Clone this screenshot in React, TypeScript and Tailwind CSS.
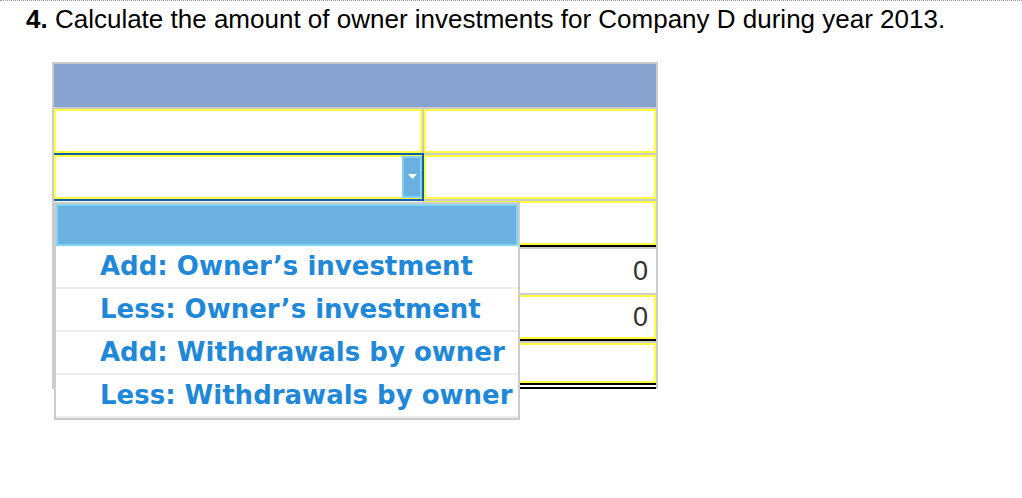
const options = [
  "Add: Owner’s investment",
  "Less: Owner’s investment",
  "Add: Withdrawals by owner",
  "Less: Withdrawals by owner",
];

function YellowCell({ children }: { children?: React.ReactNode }) {
  return (
    <div className="flex h-full items-center justify-end border-2 border-[#ffff40] bg-white pr-[6px]">
      {children}
    </div>
  );
}

function PlainCell({ children }: { children?: React.ReactNode }) {
  return <div className="flex h-full items-center justify-end bg-white pr-[8px]">{children}</div>;
}

export default function App() {
  return (
    <div className="relative h-[498px] w-[1022px] overflow-hidden border-t border-dotted border-[#9a9a9a] bg-white">
      <h1 className="pl-[26px] pt-[3px] font-['Liberation_Sans',Arial,sans-serif] text-[26px] leading-[30px] text-black">
        <span className="font-bold">4.</span> Calculate the amount of owner investments for Company D during year 2013.
      </h1>

      {/* worksheet table */}
      <div className="ml-[52px] mt-[28px] w-[606px] bg-[#cbcbcb] px-[2px] pt-[2px] font-['Liberation_Sans',Arial,sans-serif] text-[27px] text-[#333]">
        <div className="grid grid-cols-[368px_232px] gap-[2px]">
          <div className="col-span-2 h-[43px] bg-[#87a3d0]" />

          <div className="h-[44px]">
            <YellowCell />
          </div>
          <div className="h-[44px]">
            <YellowCell />
          </div>

          <div className="relative h-[44px] shadow-[0_-2px_0_#0d5fa8,2px_0_0_#0d5fa8,0_2px_0_#0d5fa8,2px_2px_0_#0d5fa8,2px_-2px_0_#0d5fa8]">
            <YellowCell />
            <div className="absolute bottom-[1px] right-0 top-[1px] flex w-[20px] items-center justify-center border-2 border-[#7fd2f2] bg-[#6ab0e0]">
              <svg width="9" height="6" viewBox="0 0 9 6">
                <path d="M0 0 H9 L4.5 5 Z" fill="#ffffff" />
              </svg>
            </div>
          </div>
          <div className="h-[44px]">
            <YellowCell />
          </div>

          {/* rows covered by the open list */}
          <div className="h-[46px] bg-white" />
          <div className="h-[46px] border-b-2 border-black">
            <YellowCell />
          </div>

          <div className="h-[44px] bg-white" />
          <div className="h-[44px]">
            <PlainCell>0</PlainCell>
          </div>

          <div className="h-[46px] bg-white" />
          <div className="h-[46px] border-b-2 border-black">
            <YellowCell>0</YellowCell>
          </div>

          <div className="h-[46px] bg-white" />
          <div className="h-[46px] border-b-[6px] border-double border-black bg-white">
            <YellowCell />
          </div>
        </div>
      </div>

      {/* open dropdown list */}
      <div className="absolute left-[54px] top-[201px] w-[466px] border-2 border-[#cccccc] bg-white font-['DejaVu_Sans',Verdana,sans-serif] text-[26px] font-bold text-[#1f88d8]">
        <div className="h-[42px] border-2 border-[#80d4f4] bg-[#6ab0e0]" />
        {options.map((o) => (
          <div
            key={o}
            className="flex h-[43px] items-center whitespace-nowrap border-b-2 border-[#ececec] pl-[44px]"
          >
            {o}
          </div>
        ))}
      </div>
    </div>
  );
}
